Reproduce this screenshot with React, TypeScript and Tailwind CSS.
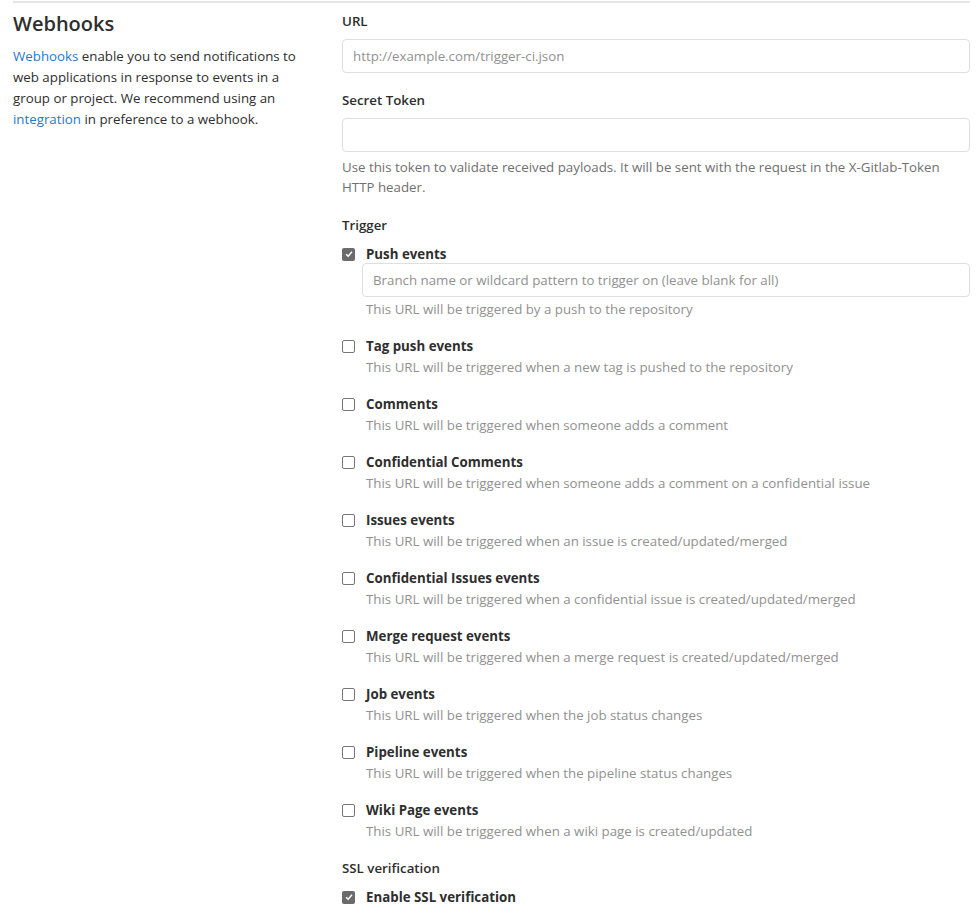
const triggers = [
  { label: "Tag push events", help: "This URL will be triggered when a new tag is pushed to the repository" },
  { label: "Comments", help: "This URL will be triggered when someone adds a comment" },
  { label: "Confidential Comments", help: "This URL will be triggered when someone adds a comment on a confidential issue" },
  { label: "Issues events", help: "This URL will be triggered when an issue is created/updated/merged" },
  { label: "Confidential Issues events", help: "This URL will be triggered when a confidential issue is created/updated/merged" },
  { label: "Merge request events", help: "This URL will be triggered when a merge request is created/updated/merged" },
  { label: "Job events", help: "This URL will be triggered when the job status changes" },
  { label: "Pipeline events", help: "This URL will be triggered when the pipeline status changes" },
  { label: "Wiki Page events", help: "This URL will be triggered when a wiki page is created/updated" },
]

function Checkbox({ checked }: { checked?: boolean }) {
  if (checked) {
    return (
      <span className="flex h-[13px] w-[13px] shrink-0 items-center justify-center rounded-[2px] bg-[#6b6b6b]">
        <svg viewBox="0 0 12 12" className="h-[10px] w-[10px]">
          <path d="M2.5 6.2 L5 8.6 L9.6 3.4" fill="none" stroke="#fff" strokeWidth="1.8" />
        </svg>
      </span>
    )
  }
  return <span className="h-[13px] w-[13px] shrink-0 rounded-[2px] border border-[#767676] bg-white" />
}

export default function App() {
  return (
    <div className="min-h-[919px] bg-white text-[13.3px] leading-[20px] text-[#2e2e2e]" style={{ fontFamily: '"Open Sans", "Noto Sans", sans-serif' }}>
      <div className="ml-[13px] mr-[8px] mt-px flex border-t-2 border-[#e5e5e5]">
        <div className="w-[314px] shrink-0">
          <h4 className="mt-[8px] text-[20px] font-semibold leading-[26px]">Webhooks</h4>
          <p className="mt-[9px] max-w-[300px] leading-[21px]">
            <a className="text-[#1f78d1]">Webhooks</a> enable you to send notifications to web applications in response to events in a group or project. We recommend using an{" "}
            <a className="text-[#1f78d1]">integration</a> in preference to a webhook.
          </p>
        </div>
        <div className="ml-[15px] flex-1">
          <div className="mt-[8px] font-semibold">URL</div>
          <div className="mt-[8px] flex h-[34px] items-center rounded-[4px] border border-[#dfdfdf] px-[10px] text-[#919191]">
            http://example.com/trigger-ci.json
          </div>
          <div className="mt-[17px] font-semibold">Secret Token</div>
          <div className="mt-[8px] h-[34px] rounded-[4px] border border-[#dfdfdf]" />
          <p className="mt-[5px] text-[#707070]">
            Use this token to validate received payloads. It will be sent with the request in the X-Gitlab-Token HTTP header.
          </p>
          <div className="mt-[18px] font-semibold">Trigger</div>
          <div className="mt-[9px]">
            <div className="flex items-center gap-[11px]">
              <Checkbox checked />
              <span className="font-bold">Push events</span>
            </div>
            <div className="ml-[20px]">
              <div className="-mt-px flex h-[34px] items-center rounded-[4px] border border-[#dfdfdf] px-[10px] text-[#919191]">
                Branch name or wildcard pattern to trigger on (leave blank for all)
              </div>
              <div className="ml-[4px] mt-[2px] text-[#919191]">This URL will be triggered by a push to the repository</div>
            </div>
          </div>
          {triggers.map((t) => (
            <div key={t.label} className="mt-[17px]">
              <div className="flex items-center gap-[11px]">
                <Checkbox />
                <span className="font-bold">{t.label}</span>
              </div>
              <div className="ml-[24px] mt-px text-[#919191]">{t.help}</div>
            </div>
          ))}
          <div className="mt-[17px] font-semibold">SSL verification</div>
          <div className="mt-[9px] flex items-center gap-[11px]">
            <Checkbox checked />
            <span className="font-bold">Enable SSL verification</span>
          </div>
        </div>
      </div>
    </div>
  )
}
